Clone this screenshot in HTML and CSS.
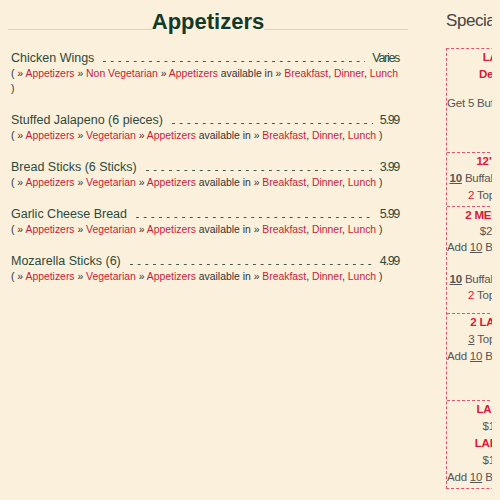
FILE: index.html
```html
<!DOCTYPE html>
<html>
<head>
<meta charset="utf-8">
<link rel="stylesheet" href="styles.css">
</head>
<body>
<div class="page">
  <main class="menu">
    <h2 class="menu-title"><span>Appetizers</span></h2>
    <div class="item">
      <div class="item-row"><span class="item-name">Chicken Wings</span><span class="leader"></span><span class="price">Varies</span></div>
      <div class="item-meta">( » <a>Appetizers</a> » <a>Non Vegetarian</a> » <a>Appetizers</a> available in » <a>Breakfast</a>, <a>Dinner</a>, <a>Lunch</a> )</div>
    </div>
    <div class="item">
      <div class="item-row"><span class="item-name">Stuffed Jalapeno (6 pieces)</span><span class="leader"></span><span class="price">5.99</span></div>
      <div class="item-meta">( » <a>Appetizers</a> » <a>Vegetarian</a> » <a>Appetizers</a> available in » <a>Breakfast</a>, <a>Dinner</a>, <a>Lunch</a> )</div>
    </div>
    <div class="item">
      <div class="item-row"><span class="item-name">Bread Sticks (6 Sticks)</span><span class="leader"></span><span class="price">3.99</span></div>
      <div class="item-meta">( » <a>Appetizers</a> » <a>Vegetarian</a> » <a>Appetizers</a> available in » <a>Breakfast</a>, <a>Dinner</a>, <a>Lunch</a> )</div>
    </div>
    <div class="item">
      <div class="item-row"><span class="item-name">Garlic Cheese Bread</span><span class="leader"></span><span class="price">5.99</span></div>
      <div class="item-meta">( » <a>Appetizers</a> » <a>Vegetarian</a> » <a>Appetizers</a> available in » <a>Breakfast</a>, <a>Dinner</a>, <a>Lunch</a> )</div>
    </div>
    <div class="item">
      <div class="item-row"><span class="item-name">Mozarella Sticks (6)</span><span class="leader"></span><span class="price">4.99</span></div>
      <div class="item-meta">( » <a>Appetizers</a> » <a>Vegetarian</a> » <a>Appetizers</a> available in » <a>Breakfast</a>, <a>Dinner</a>, <a>Lunch</a> )</div>
    </div>
  </main>
  <aside class="specials">
    <h3 class="specials-title">Specials</h3>
    <div class="specials-box">
      <section class="deal deal-1">
        <div class="hl">LARGE SPECIALTY PIZZAS</div>
        <div class="hl">Deluxe Pizzas with 10 Wings!</div>
        <div class="txt gap">Get 5 Buffalo Wings for free with any Large Pizza</div>
      </section>
      <section class="deal deal-2">
        <div class="hl">12" MEDIUM PIZZAS + WINGS</div>
        <div class="txt"><b class="u">10</b> Buffalo Wings with a 12" Medium Pizzas</div>
        <div class="txt"><span class="red">2</span> Toppings for only $18.99 plus Tax.</div>
      </section>
      <section class="deal deal-3">
        <div class="hl">2 MEDIUM ONE TOPPING PIZZAS!</div>
        <div class="txt">$21.99 plus tax (Pick Up Only).</div>
        <div class="txt">Add <span class="u">10</span> Buffalo Wings for only $10.99 more + tax</div>
        <div class="txt red">1 Liter Soda for FREE!!</div>
        <div class="txt"><b class="u">10</b> Buffalo Wings with a 12" Medium Pizzas</div>
        <div class="txt"><span class="red">2</span> Toppings for only $18.99 plus Tax.</div>
      </section>
      <section class="deal deal-4">
        <div class="hl">2 LARGE ONE TOPPING PIZZAS</div>
        <div class="txt"><span class="u">3</span> Toppings Each, All for only $29.99</div>
        <div class="txt">Add <span class="u">10</span> Buffalo Wings for only $10.99 more + tax</div>
      </section>
      <section class="deal deal-5">
        <div class="hl">LARGE 16" CHEESE PIZZAS!!</div>
        <div class="txt">$12.99 for Pick Up or Delivery</div>
        <div class="hl">LARGE ONE TOPPING PIZZAS</div>
        <div class="txt">$14.99 for Pick Up or Delivery</div>
        <div class="txt">Add <span class="u">10</span> Buffalo Wings for only $10.99 more + tax</div>
      </section>
    </div>
  </aside>
</div>
</body>
</html>
```
FILE: styles.css
```css
html {
  overflow: hidden;
  background: #fbf0dc;
}
body {
  margin: 8px;
  font-family: "Liberation Sans", Arial, sans-serif;
  color: #333;
}
.page {
  display: flex;
  align-items: flex-start;
  gap: 38px;
}
.menu {
  flex: none;
  width: 400px;
}
.menu-title {
  position: relative;
  margin: 0 0 14px;
  height: 28px;
  line-height: 28px;
  font-size: 22px;
  font-weight: bold;
  color: #123a2a;
  text-align: center;
}
.menu-title::before {
  content: "";
  position: absolute;
  left: 0;
  right: 0;
  top: 21px;
  height: 1px;
  background: #d6d3c4;
}
.menu-title span {
  position: relative;
  background: #fbf0dc;
}
.item {
  padding: 0 9px 0 3px;
  margin-bottom: 16px;
}
.item-row {
  display: flex;
  line-height: 16px;
  font-size: 12.5px;
  color: #2b4a3a;
}
.item-name {
  flex: none;
}
.leader {
  flex: 1;
  margin: 0 7px 0 9px;
  background-image: linear-gradient(to right, #3f5a4c 3px, transparent 3px);
  background-size: 7.7px 1px;
  background-repeat: repeat-x;
  background-position: 0 11px;
}
.price {
  flex: none;
  letter-spacing: -1.3px;
}
.item-meta {
  font-size: 10.4px;
  line-height: 15px;
  color: #333;
}
.item-meta a {
  color: #c41e3a;
}
.specials {
  flex: none;
  width: 220px;
}
.specials-title {
  margin: 0 0 14px;
  font-size: 17px;
  letter-spacing: -0.45px;
  line-height: 26px;
  font-weight: normal;
  color: #444;
}
.specials-box {
  border: 1px dashed #de5573;
  text-align: center;
  font-size: 11.5px;
  letter-spacing: -0.2px;
  color: #555;
  white-space: nowrap;
}
.deal + .deal {
  border-top: 1px dashed #de5573;
}
.hl {
  font-weight: bold;
  color: #d8193a;
}
.red {
  color: #d8193a;
}
.u {
  text-decoration: underline;
}
.deal-1 {
  line-height: 17px;
  height: 103px;
}
.deal-1 .gap {
  margin-top: 12px;
}
.deal-2 {
  line-height: 17px;
  height: 53px;
}
.deal-3 {
  line-height: 16px;
  height: 106px;
}
.deal-4 {
  line-height: 17px;
  height: 86px;
}
.deal-5 {
  line-height: 17px;
  height: 87px;
}
```
